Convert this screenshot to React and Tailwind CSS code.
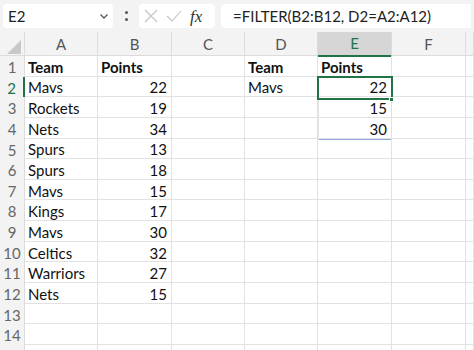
import React from 'react'

// ── Sheet data ────────────────────────────────────────────────────────────────

const cols = ['A', 'B', 'C', 'D', 'E', 'F', '']

const rows = [
    ['Team', 'Points', '', 'Team', 'Points'],
    ['Mavs', 22, '', 'Mavs', 22],
    ['Rockets', 19, '', '', 15],
    ['Nets', 34, '', '', 30],
    ['Spurs', 13],
    ['Spurs', 18],
    ['Mavs', 15],
    ['Kings', 17],
    ['Mavs', 30],
    ['Celtics', 32],
    ['Warriors', 27],
    ['Nets', 15],
    [],
    [],
    [],
]

const font = { fontFamily: 'Lato, "Open Sans", sans-serif' }

function FormulaBar() {
    return (
        <div className="flex items-center h-[32px] bg-[#f3f3f3] px-[3px] gap-[6px]">
            <div className="flex items-center justify-between w-[110px] h-[24px] bg-white rounded-[4px] pl-[5px] pr-[4px]">
                <span className="text-[15px] text-[#222]">E2</span>
                <svg width="10" height="10" viewBox="0 0 10 10">
                    <path d="M1.5 3.5 L5 7 L8.5 3.5" fill="none" stroke="#555" strokeWidth="1.3" />
                </svg>
            </div>
            <div className="flex flex-col gap-[4px] w-[14px] items-center">
                <span className="w-[3px] h-[3px] bg-[#555] rounded-full" />
                <span className="w-[3px] h-[3px] bg-[#555] rounded-full" />
            </div>
            <div className="flex items-center w-[76px] h-[24px] bg-white rounded-[4px] pl-[5px] gap-[8px]">
                <svg width="14" height="14" viewBox="0 0 14 14">
                    <path d="M1 1 L13 13 M13 1 L1 13" stroke="#c3c3c3" strokeWidth="1.1" />
                </svg>
                <svg width="16" height="14" viewBox="0 0 16 14">
                    <path d="M1 7 L6 12 L15 2" fill="none" stroke="#c3c3c3" strokeWidth="1.1" />
                </svg>
                <span className="italic text-[17px] text-[#333] leading-none" style={{ fontFamily: '"Liberation Serif", serif' }}>fx</span>
            </div>
            <div className="flex items-center flex-1 h-[24px] bg-white rounded-l-[4px] pl-[12px]">
                <span className="text-[15px] text-[#222]">=FILTER(B2:B12, D2=A2:A12)</span>
            </div>
        </div>
    )
}

export default function App() {
    const grid = 'grid grid-cols-[25px_73px_74px_73px_73px_74px_74px_1fr]'

    return (
        <div className="w-[474px] h-[350px] overflow-hidden bg-white" style={font}>
            <FormulaBar />

            {/* ── Column headers ── */}
            <div className={`${grid} h-[24px] bg-[#f3f3f3] border-b border-[#dcdcdc]`}>
                <div className="relative border-r border-[#dcdcdc]">
                    <div className="absolute right-[3px] bottom-[3px] w-0 h-0 border-l-[14px] border-l-transparent border-b-[14px] border-b-[#c8c8c8]" />
                </div>
                {cols.map((c, j) => (
                    <div
                        key={j}
                        className={c === 'E'
                            ? 'flex items-center justify-center text-[15px] text-[#217346] bg-[#d6d6d6] border-r border-[#dcdcdc] border-b-2 border-b-[#217346]'
                            : 'flex items-center justify-center text-[15px] text-[#555] border-r border-[#dcdcdc]'}
                    >
                        {c}
                    </div>
                ))}
            </div>

            {/* ── Rows ── */}
            {rows.map((r, i) => (
                <div key={i} className={`${grid} h-[20.65px] border-b border-[#e2e2e2]`}>
                    <div className={i === 1
                        ? 'flex items-center justify-center text-[15px] text-[#217346] bg-[#f3f3f3] border-r-2 border-[#217346]'
                        : 'flex items-center justify-center text-[15px] text-[#666] bg-[#f3f3f3] border-r border-[#dcdcdc]'}>
                        {i < 14 ? i + 1 : null}
                    </div>
                    {cols.map((c, j) => {
                        const v = r[j]
                        const isNum = typeof v === 'number'
                        const bold = i === 0 && v
                        let extra = ''
                        if (c === 'E' && i === 1) extra = ' relative outline-2 outline-[#217346] -outline-offset-1 z-10'
                        else if (c === 'E' && (i === 2 || i === 3)) extra = ' relative border-x border-[#8fa9da]' + (i === 3 ? ' shadow-[inset_0_-1px_0_#8fa9da]' : '')
                        return (
                            <div
                                key={j}
                                className={`flex items-center text-[15px] text-[#111] border-r border-[#e2e2e2] leading-none ${isNum ? 'justify-end pr-[4px]' : 'pl-[3px]'}${bold ? ' font-bold' : ''}${extra}`}
                            >
                                {v !== undefined && v !== '' ? v : null}
                                {c === 'E' && i === 1 && (
                                    <span className="absolute right-[-3px] bottom-[-3px] w-[5px] h-[5px] bg-[#217346] border border-white" />
                                )}
                            </div>
                        )
                    })}
                </div>
            ))}
        </div>
    )
}
